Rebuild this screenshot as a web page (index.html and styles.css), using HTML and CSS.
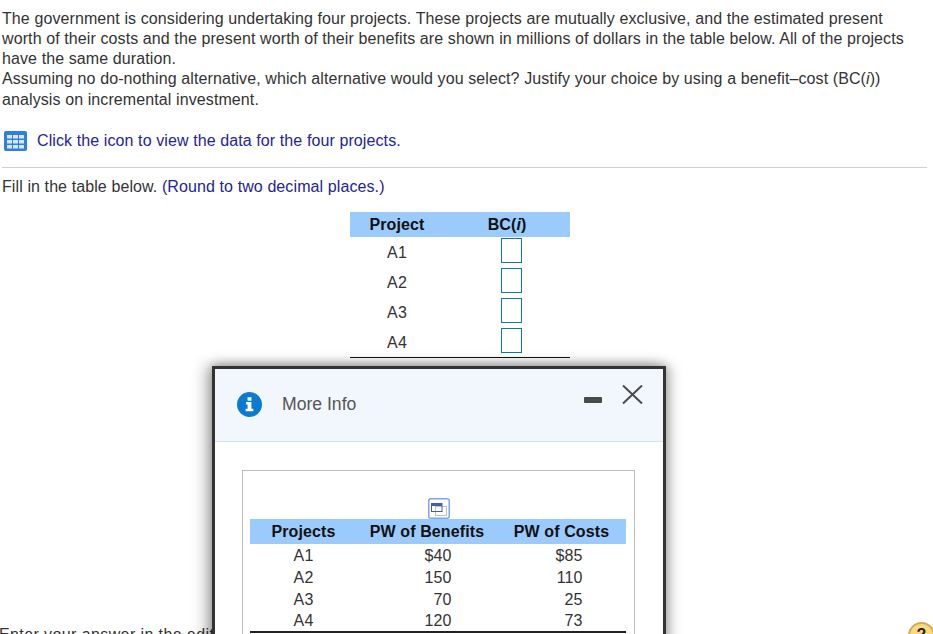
FILE: index.html
```html
<!DOCTYPE html>
<html lang="en">
<head>
<meta charset="utf-8">
<title>More Info</title>
<link rel="stylesheet" href="styles.css">
</head>
<body>
<main class="page">
  <p class="problem">The government is considering undertaking four projects. These projects are mutually exclusive, and the estimated present worth of their costs and the present worth of their benefits are shown in millions of dollars in the table below. All of the projects have the same duration.<br>Assuming no do-nothing alternative, which alternative would you select? Justify your choice by using a benefit&ndash;cost (BC(<i>i</i>)) analysis on incremental investment.</p>
  <div class="data-link">
    <svg class="grid-icon" width="23" height="20" viewBox="0 0 23 20">
      <rect width="23" height="20" rx="2" fill="#2f7fdc"/>
      <g fill="#d8e8fb">
        <rect x="3" y="4" width="5" height="3.500"/><rect x="9" y="4" width="5" height="3.500"/><rect x="15" y="4" width="5" height="3.500"/>
        <rect x="3" y="9" width="5" height="3.500"/><rect x="9" y="9" width="5" height="3.500"/><rect x="15" y="9" width="5" height="3.500"/>
        <rect x="3" y="14" width="5" height="3.500"/><rect x="9" y="14" width="5" height="3.500"/><rect x="15" y="14" width="5" height="3.500"/>
      </g>
    </svg>
    <span class="hint">Click the icon to view the data for the four projects.</span>
  </div>
  <hr class="rule">
  <p class="instruction">Fill in the table below. <span class="hint">(Round to two decimal places.)</span></p>
  <table class="answers">
    <thead><tr><th>Project</th><th class="bc">BC(<i>i</i>)</th></tr></thead>
    <tbody>
      <tr><td>A1</td><td class="bc"><span class="box"></span></td></tr>
      <tr><td>A2</td><td class="bc"><span class="box"></span></td></tr>
      <tr><td>A3</td><td class="bc"><span class="box"></span></td></tr>
      <tr><td>A4</td><td class="bc"><span class="box"></span></td></tr>
    </tbody>
  </table>
</main>

<p class="footer-note">Enter your answer in the edit fields and then click Check Answer.</p>
<div class="help-badge">?</div>

<section class="dialog">
  <header class="dialog-head">
    <svg class="info-icon" width="25" height="25" viewBox="0 0 26 26">
      <circle cx="13" cy="13" r="13" fill="#0b7bd0"/>
      <path fill="#fff" d="M11 5.500h4v3.500h-4zM9.500 10.500h5.500v7h2v2.500h-8v-2.500h2v-4.500h-1.500z"/>
    </svg>
    <h2 class="dialog-title">More Info</h2>
    <div class="dialog-controls">
      <span class="minimize"></span>
      <svg class="close" width="21" height="19" viewBox="0 0 21 19"><path d="M1 0.500 L20 18.500 M20 0.500 L1 18.500" stroke="#4a4a4a" stroke-width="2" fill="none"/></svg>
    </div>
  </header>
  <div class="dialog-body">
    <div class="data-panel">
      <div class="copy-row">
        <svg class="copy-icon" width="22" height="21" viewBox="0 0 22 21">
          <rect x="0.750" y="0.750" width="20.500" height="19.500" rx="2" fill="#fff" stroke="#7ea6f2" stroke-width="1.500"/>
          <rect x="7.500" y="8.500" width="11" height="9" fill="#fff" stroke="#b4bce0"/>
          <rect x="3.500" y="5.500" width="10.500" height="8" fill="none" stroke="#4f5aa5"/>
          <rect x="3.500" y="5" width="10.500" height="3" fill="#4f5aa5"/>
        </svg>
      </div>
      <table class="projects">
        <thead><tr><th class="col-a">Projects</th><th class="col-b">PW of Benefits</th><th class="col-c">PW of Costs</th></tr></thead>
        <tbody>
          <tr><td class="col-a">A1</td><td class="col-b"><span class="num">$40</span></td><td class="col-c"><span class="num">$85</span></td></tr>
          <tr><td class="col-a">A2</td><td class="col-b"><span class="num">150</span></td><td class="col-c"><span class="num">110</span></td></tr>
          <tr><td class="col-a">A3</td><td class="col-b"><span class="num">70</span></td><td class="col-c"><span class="num">25</span></td></tr>
          <tr><td class="col-a">A4</td><td class="col-b"><span class="num">120</span></td><td class="col-c"><span class="num">73</span></td></tr>
        </tbody>
      </table>
    </div>
  </div>
</section>
</body>
</html>
```

FILE: styles.css
```css
* { box-sizing: border-box; }
html, body { margin: 0; height: 634px; overflow: hidden; background: #fff; }
body {
  position: relative;
  width: 933px;
  font-family: "Liberation Sans", Arial, sans-serif;
  font-size: 16px;
  letter-spacing: 0.1px;
  color: #333;
}
.page { padding: 8.500px 6px 0 2px; }
.problem { margin: 0; padding-right: 10px; line-height: 20.300px; }
.data-link { display: flex; align-items: center; gap: 10px; margin-top: 20.100px; height: 22px; padding-left: 2px; }
.grid-icon { flex: none; }
.hint { color: #24249a; }
.rule { border: 0; border-top: 1px solid #cfcfdc; margin: 15px 0 0; }
.instruction { margin: 9px 0 0; line-height: 20px; }
table { border-collapse: collapse; }
th { font-weight: bold; color: #111; padding: 0; background: #9bcbfd; }
td { padding: 1px 0 0; text-align: center; }
.answers { margin: 15px auto 0 348px; width: 220px; border-bottom: 1px solid #111; }
.answers th { height: 25px; width: 94px; }
.answers th.bc { width: 126px; }
.answers td { height: 30px; padding-top: 2px; }
.box { display: block; width: 21px; height: 25px; margin: 0 0 0 57px; border: 1px solid #0f7a99; }
.answers td.bc { padding-top: 0; padding-bottom: 3px; }
.footer-note { position: absolute; left: -1px; top: 626px; margin: 0; line-height: 18px; white-space: nowrap; letter-spacing: 0.4px; }
.help-badge {
  position: absolute; left: 908px; top: 622px; width: 27px; height: 27px; border-radius: 50%;
  background: #fbd97e; border: 2px solid #c9ae5e; text-align: center; font-weight: bold; line-height: 22px; color: #222;
}
.dialog {
  position: absolute; left: 212px; top: 366px; width: 454px; height: 300px;
  background: #fff; border: 3px solid #333;
  box-shadow: -6px 0 14px rgba(0,0,0,.3), 5px 0 12px rgba(0,0,0,.22), 0 -2px 8px rgba(0,0,0,.15);
}
.dialog-head {
  display: flex; align-items: center; height: 73px; padding: 0 20px 2px 22px;
  background: #f2f7fe; border-bottom: 1px solid #d3e3f3;
}
.dialog-title { margin: 0 0 0 20px; font-size: 17.600px; font-weight: normal; letter-spacing: 0; color: #555; }
.info-icon { flex: none; }
.dialog-controls { margin-left: auto; align-self: flex-start; display: flex; align-items: flex-start; gap: 20px; padding-top: 16px; }
.minimize { display: block; width: 18px; height: 6px; margin-top: 12px; background: #4a4a4a; border-radius: 1px; }
.close { display: block; }
.dialog-body { padding: 28px 29px 0 27px; }
.data-panel { border: 1px solid #bdbdbd; border-bottom: 0; padding: 27px 0 0 7px; height: 200px; margin-right: -1px; }
.copy-row { display: flex; height: 21px; padding-left: 178px; }
.copy-row svg { display: block; }
.projects { width: 376px; border-bottom: 2px solid #222; }
.projects th { height: 25px; white-space: nowrap; }
.projects td { height: 22px; }
.col-a { width: 107px; }
.col-b { width: 140px; }
.col-c { width: 129px; }
td.col-b { padding-left: 22px; }
td.col-c { padding-left: 15px; }
.num { display: inline-block; text-align: right; min-width: 27px; }
```
